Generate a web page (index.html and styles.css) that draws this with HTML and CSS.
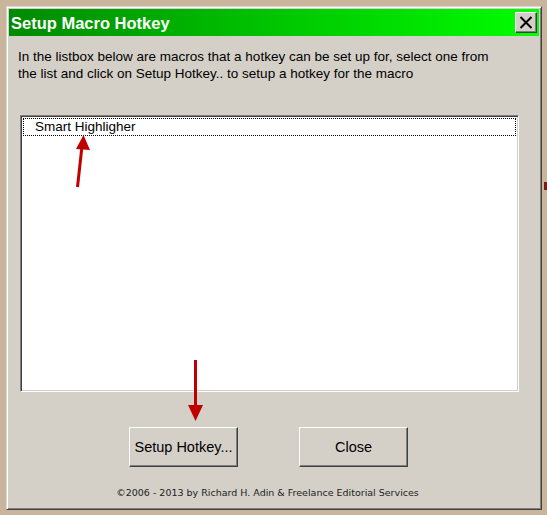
FILE: index.html
```html
<!DOCTYPE html>
<html lang="en">
<head>
    <meta charset="UTF-8">
    <title>Setup Macro Hotkey</title>
    <link rel="stylesheet" href="styles.css">
</head>
<body>
    <div class="dialog">
        <div class="titlebar">
            <span class="title">Setup Macro Hotkey</span>
            <button class="close-x" aria-label="Close">
                <svg width="14" height="13" viewBox="0 0 14 13">
                    <path d="M1.5 1 L12.5 12 M12.5 1 L1.5 12" stroke="#000" stroke-width="2" fill="none"/>
                </svg>
            </button>
        </div>

        <div class="content">
            <p class="desc">In the listbox below are macros that a hotkey can be set up for, select one from the list and click on Setup Hotkey.. to setup a hotkey for the macro</p>

            <div class="listbox">
                <div class="list-item selected">Smart Highligher</div>
            </div>

            <div class="buttons">
                <button class="btn">Setup Hotkey...</button>
                <button class="btn">Close</button>
            </div>

            <div class="footer">&copy;2006 - 2013 by Richard H. Adin &amp; Freelance Editorial Services</div>
        </div>
    </div>

    <!-- annotation arrows drawn over the screenshot -->
    <svg class="annotations" width="547" height="515" viewBox="0 0 547 515">
        <line x1="77.5" y1="187" x2="82" y2="146" stroke="#c00000" stroke-width="3"/>
        <polygon points="83.5,135 76,149 90,150" fill="#c00000"/>
        <line x1="195.5" y1="360" x2="195.5" y2="408" stroke="#c00000" stroke-width="3"/>
        <polygon points="188,405 203,405 195.5,421" fill="#c00000"/>
        <rect x="544" y="182" width="3" height="8" fill="#7a1a10"/>
    </svg>
</body>
</html>
```

FILE: styles.css
```css
/* Global */
* {
    margin: 0;
    padding: 0;
    box-sizing: border-box;
}

body {
    background-color: #c9b59b;
    padding: 6px;
    font-family: 'Liberation Sans', Arial, sans-serif;
    color: #000;
    position: relative;
    width: 547px;
    height: 515px;
    overflow: hidden;
}

/* Dialog frame */
.dialog {
    width: 536px;
    height: 504px;
    background-color: #d4d0c8;
    border: 1px solid;
    border-color: #dcd8d0 #404040 #404040 #dcd8d0;
    box-shadow: inset 1px 1px #fff, inset -1px -1px #808080;
    padding: 2px;
}

.titlebar {
    height: 27px;
    background: linear-gradient(to right, #008a00, #00ff00);
    display: flex;
    align-items: flex-start;
    justify-content: space-between;
    padding: 3px 2px 0 2px;
}

.title {
    color: #fff;
    font-weight: 700;
    font-size: 16.5px;
    line-height: 22px;
}

.close-x {
    width: 22px;
    height: 21px;
    background-color: #d4d0c8;
    border: 1px solid;
    border-color: #fff #404040 #404040 #fff;
    box-shadow: inset -1px -1px #808080;
    display: flex;
    align-items: center;
    justify-content: center;
}

/* Content */
.content {
    padding: 12px 9px 0 9px;
}

.desc {
    max-width: 490px;
    font-size: 13.5px;
    line-height: 17px;
}

.listbox {
    width: 499px;
    height: 277px;
    margin: 33px 0 0 2px;
    background-color: #fff;
    border: 1px solid;
    border-color: #808080 #fff #fff #808080;
    box-shadow: inset 1px 1px #404040, inset -1px -1px #d4d0c8;
    padding: 2px;
}

.list-item {
    height: 18px;
    font-size: 13.5px;
    line-height: 16px;
    padding-left: 11px;
}

.list-item.selected {
    border: 1px dotted #000;
}

.buttons {
    display: flex;
    gap: 61px;
    margin-top: 35px;
    padding-left: 111px;
}

.btn {
    width: 109px;
    height: 40px;
    background-color: #d4d0c8;
    border: 1px solid;
    border-color: #fff #404040 #404040 #fff;
    box-shadow: inset -1px -1px #808080;
    font-family: 'Liberation Sans', Arial, sans-serif;
    font-size: 14.5px;
    color: #000;
}

.footer {
    margin-top: 20px;
    padding-right: 13px;
    text-align: center;
    font-family: 'DejaVu Sans', Verdana, sans-serif;
    font-size: 9.5px;
    line-height: 12px;
    color: #222;
}

/* Overlay arrows */
.annotations {
    position: absolute;
    left: 0;
    top: 0;
}
```
